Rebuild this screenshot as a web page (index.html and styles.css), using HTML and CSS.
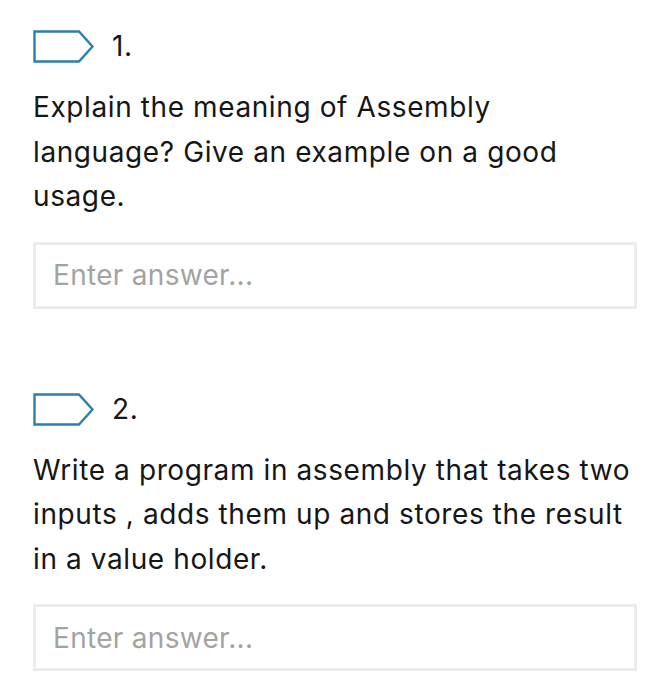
FILE: index.html
```html
<!DOCTYPE html>
<html lang="en">
<head>
<meta charset="utf-8">
<title>Questions</title>
<link rel="stylesheet" href="styles.css">
</head>
<body>
<main class="page">
  <section class="item">
    <div class="item-head">
      <svg class="flag" viewBox="0 0 62 33" width="62" height="33" aria-hidden="true">
        <path d="M1.5 1.5 H46 L59.5 16.5 L46 31.5 H1.5 Z" fill="none" stroke="#2a7fab" stroke-width="2.4" stroke-linejoin="miter"/>
      </svg>
      <span class="num">1.</span>
    </div>
    <p class="question">Explain the meaning of Assembly language? Give an example on a good usage.</p>
    <div class="answer">Enter answer...</div>
  </section>
  <section class="item">
    <div class="item-head">
      <svg class="flag" viewBox="0 0 62 33" width="62" height="33" aria-hidden="true">
        <path d="M1.5 1.5 H46 L59.5 16.5 L46 31.5 H1.5 Z" fill="none" stroke="#2a7fab" stroke-width="2.4" stroke-linejoin="miter"/>
      </svg>
      <span class="num">2.</span>
    </div>
    <p class="question">Write a program in assembly that takes two inputs , adds them up and stores the result in a value holder.</p>
    <div class="answer">Enter answer...</div>
  </section>
</main>
</body>
</html>
```
FILE: styles.css
```css
html, body {
  margin: 0;
  padding: 0;
  background: #ffffff;
}
body {
  font-family: Inter, "Open Sans", "Liberation Sans", sans-serif;
  color: #161616;
}
.page {
  padding: 30px 33px 0 33px;
  display: flex;
  flex-direction: column;
  gap: 84px;
}
.item {
  display: flex;
  flex-direction: column;
}
.item-head {
  display: flex;
  align-items: center;
  gap: 17px;
  height: 33px;
}
.flag {
  display: block;
  flex: none;
}
.num {
  font-size: 28px;
  line-height: 33px;
  letter-spacing: 0.6px;
}
.question {
  margin: 22px 0 0 0;
  font-size: 28px;
  line-height: 44.5px;
  letter-spacing: 0.6px;
}
.answer {
  margin-top: 23px;
  height: 61px;
  border: 3px solid #ececec;
  padding: 0 17px;
  display: flex;
  align-items: center;
  font-size: 28px;
  letter-spacing: 0.3px;
  color: #a3a3a3;
}
```
